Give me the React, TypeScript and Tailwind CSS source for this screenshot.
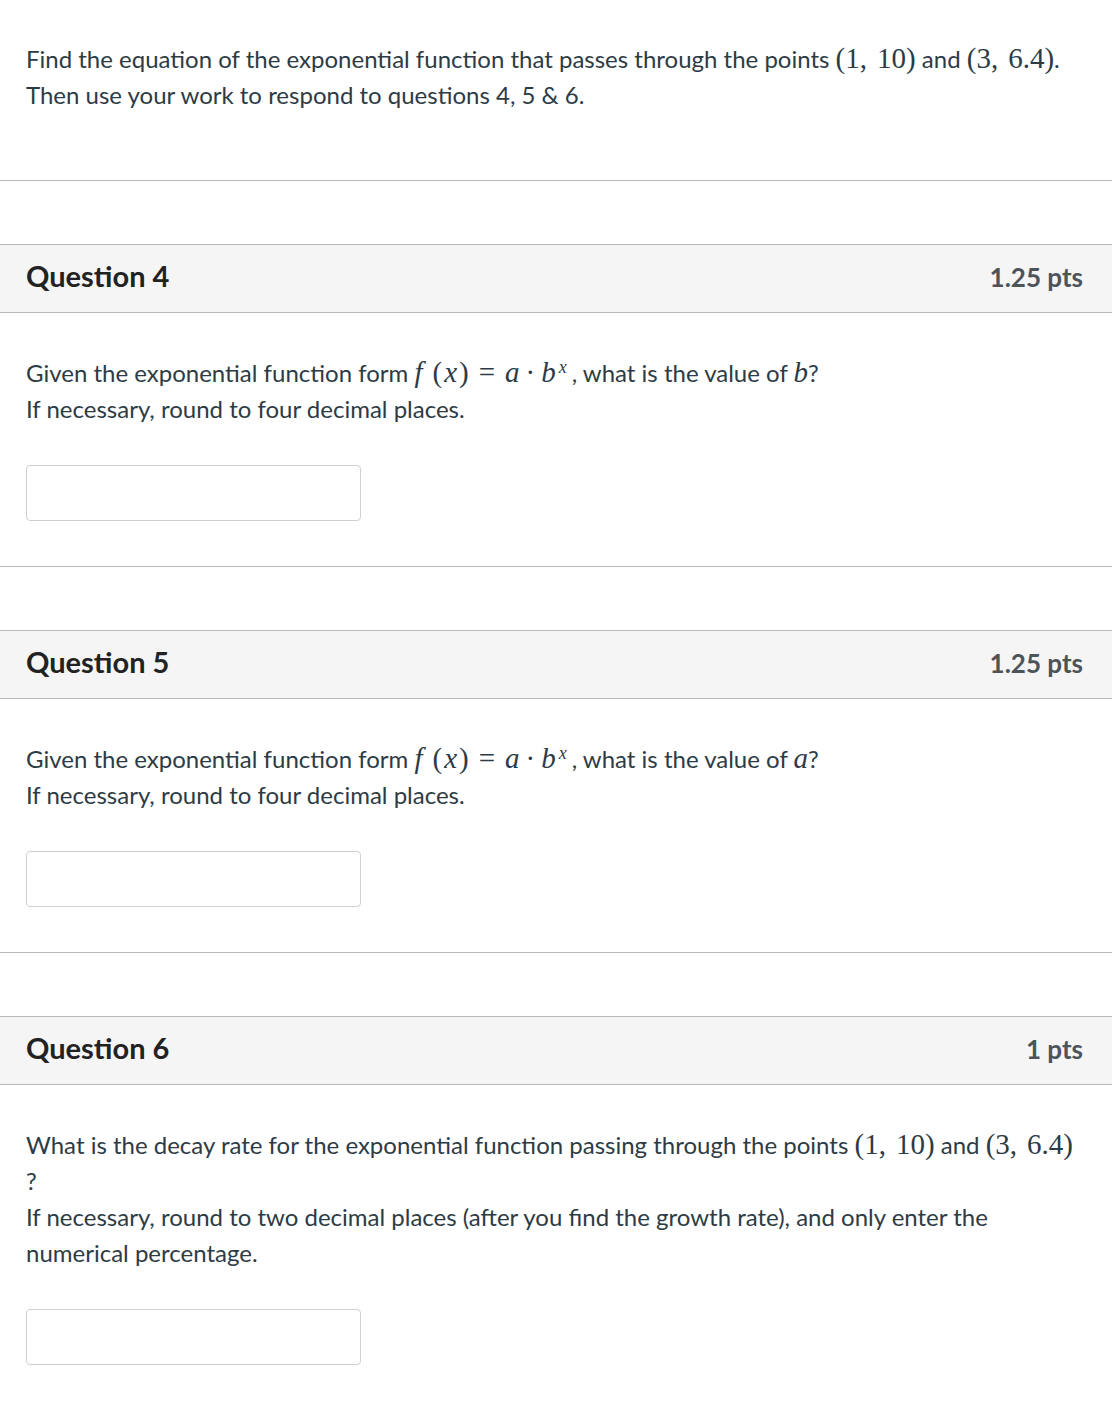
import type { ReactNode } from 'react';

const M = ({ children }: { children: ReactNode }) => (
  <span className="font-['Liberation_Serif','DejaVu_Serif',serif] text-[29px] leading-none whitespace-nowrap">
    {children}
  </span>
);

const I = ({ children }: { children: ReactNode }) => <i className="italic">{children}</i>;

const Pt = ({ a, b }: { a: string; b: string }) => (
  <M>
    ({a},<span className="inline-block w-[10px]" />
    {b})
  </M>
);

const Form = () => (
  <M>
    <I>f</I>
    <span className="inline-block w-[10px]" />(<span className="inline-block w-[2px]" />
    <I>x</I>
    <span className="inline-block w-[2px]" />)
    <span className="inline-block w-[10px]" />=<span className="inline-block w-[10px]" />
    <I>a</I>
    <span className="inline-block w-[6px]" />·<span className="inline-block w-[6px]" />
    <I>b</I>
    <sup className="text-[18px] relative -top-[9px] ml-[3px]">
      <I>x</I>
    </sup>
    <span className="inline-block w-[5px]" />
  </M>
);

function Question({ n, pts, children }: { n: number; pts: string; children: ReactNode }) {
  return (
    <section>
      <div className="mt-[63px] h-[69px] bg-[#f5f5f5] border-y border-[#b8b8b8] flex items-center justify-between px-[26px]">
        <h2 className="text-[29px] font-bold text-[#222] -mt-[5px]">Question {n}</h2>
        <span className="text-[26px] font-bold text-[#4c5359] pr-[3px] -mt-[2px]">{pts}</span>
      </div>
      <div className="px-[26px] pt-[42px]">
        <div className="leading-[36px]">{children}</div>
        <input
          type="text"
          className="mt-[38px] block w-[335px] h-[56px] border border-[#cfcfcf] rounded-[4px] bg-white"
        />
      </div>
      <div className="mt-[45px] h-px bg-[#b8b8b8]" />
    </section>
  );
}

export default function App() {
  return (
    <div className="min-h-[1403px] bg-white text-[24px] text-[#2d3b45] font-['Lato','Noto_Sans',sans-serif]">
      <div className="px-[26px] pt-[41px] leading-[36px]">
        <p>
          Find the equation of the exponential function that passes through the points <Pt a="1" b="10" /> and{' '}
          <Pt a="3" b="6.4" />.
        </p>
        <p>Then use your work to respond to questions 4, 5 &amp; 6.</p>
      </div>
      <div className="mt-[67px] h-px bg-[#b8b8b8]" />

      <Question n={4} pts="1.25 pts">
        <p>
          Given the exponential function form <Form />, what is the value of{' '}
          <M>
            <I>b</I>
          </M>
          ?
        </p>
        <p>If necessary, round to four decimal places.</p>
      </Question>

      <Question n={5} pts="1.25 pts">
        <p>
          Given the exponential function form <Form />, what is the value of{' '}
          <M>
            <I>a</I>
          </M>
          ?
        </p>
        <p>If necessary, round to four decimal places.</p>
      </Question>

      <Question n={6} pts="1 pts">
        <p>
          What is the decay rate for the exponential function passing through the points <Pt a="1" b="10" /> and{' '}
          <Pt a="3" b="6.4" />
          <br />?
        </p>
        <p>
          If necessary, round to two decimal places (after you find the growth rate), and only enter the
          <br />
          numerical percentage.
        </p>
      </Question>
    </div>
  );
}
